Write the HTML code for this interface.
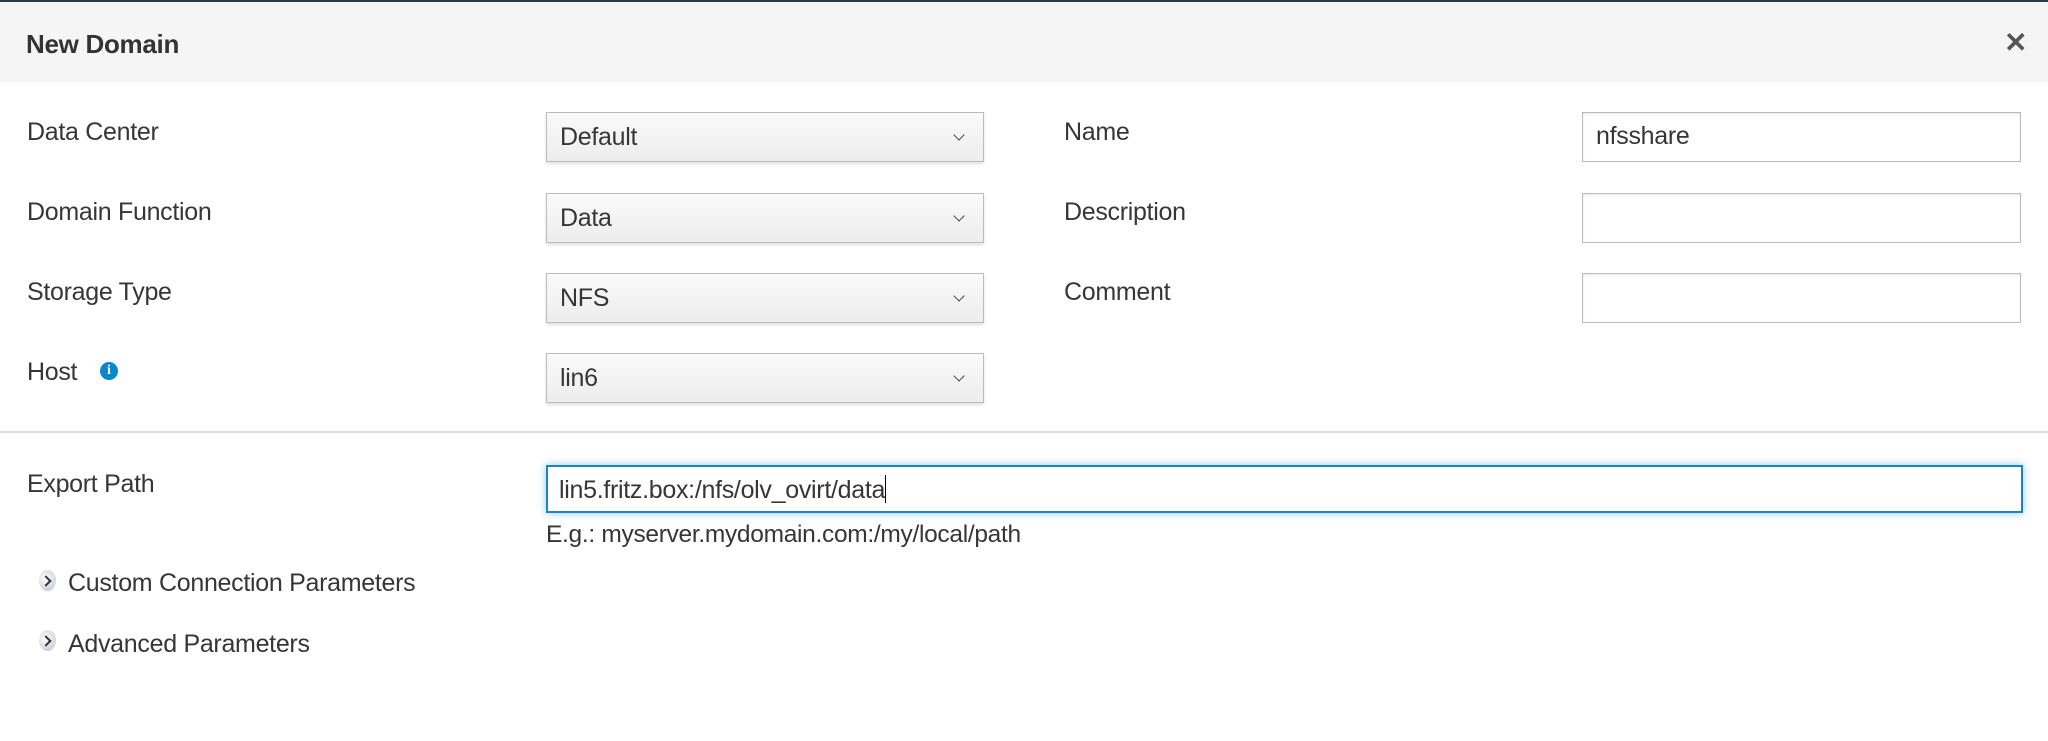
<!DOCTYPE html>
<html><head><meta charset="utf-8"><style>
*{box-sizing:border-box;margin:0;padding:0}
body{width:2048px;height:741px;background:#fff;font-family:"Liberation Sans",sans-serif;color:#363636;position:relative;overflow:hidden}
.topline{position:absolute;left:0;top:0;width:2048px;height:2px;background:#2b3a4a}
.hdr{position:absolute;left:0;top:2px;width:2048px;height:80px;background:#f5f5f5}
.title{position:absolute;left:26px;top:27px;font-size:26px;font-weight:bold;color:#333;letter-spacing:-0.3px}
.close{position:absolute;left:2004px;top:24px;font-size:28px;font-weight:bold;color:#555}
.lbl{position:absolute;font-size:25px;color:#363636;line-height:28px;letter-spacing:-0.3px}
.sel{position:absolute;width:438px;height:50px;border:1px solid #bbb;background:linear-gradient(#fafafa,#ededed);box-shadow:0 2px 3px rgba(0,0,0,.12);font-size:25px;padding:10px 13px;color:#363636;letter-spacing:-0.3px}
.sel:after{content:"";position:absolute;right:20px;top:18px;width:7px;height:7px;border-right:1.5px solid #444;border-bottom:1.5px solid #444;transform:rotate(45deg)}
.inp{position:absolute;width:439px;height:50px;border:1px solid #bbb;box-shadow:inset 0 1px 2px rgba(0,0,0,.1);background:#fff;font-size:25px;padding:9px 13px;letter-spacing:-0.3px}
.div{position:absolute;left:0;top:431px;width:2048px;height:2px;background:#ddd}
.exp{position:absolute;left:546px;top:465px;width:1477px;height:48px;border:2px solid #1a84c8;box-shadow:0 0 8px rgba(0,136,206,.45);font-size:25px;padding:8px 11px;letter-spacing:-0.3px}
.caret{display:inline-block;width:1px;height:28px;background:#000;vertical-align:-5px}
.ico{position:absolute;width:17px;height:21px;border-radius:50%;background:radial-gradient(circle at 40% 40%,#fff,#cfd3dc 70%,#a8aebb)}
.ico:after{content:"";position:absolute;left:3px;top:7px;width:6px;height:6px;border-right:2px solid #333;border-top:2px solid #333;transform:rotate(45deg)}
.info{position:absolute;left:100px;top:362px;width:18px;height:18px;border-radius:50%;background:#0a87cc;color:#fff;font-size:14px;font-weight:bold;text-align:center;line-height:18px;font-family:"Liberation Serif",serif}
</style></head><body>
<div class="topline"></div>
<div class="hdr"><div class="title">New Domain</div><div class="close">✕</div></div>

<div class="lbl" style="left:27px;top:118px">Data Center</div>
<div class="lbl" style="left:27px;top:198px">Domain Function</div>
<div class="lbl" style="left:27px;top:278px">Storage Type</div>
<div class="lbl" style="left:27px;top:358px">Host</div>
<div class="info">i</div>

<div class="sel" style="left:546px;top:112px">Default</div>
<div class="sel" style="left:546px;top:193px">Data</div>
<div class="sel" style="left:546px;top:273px">NFS</div>
<div class="sel" style="left:546px;top:353px">lin6</div>

<div class="lbl" style="left:1064px;top:118px">Name</div>
<div class="lbl" style="left:1064px;top:198px">Description</div>
<div class="lbl" style="left:1064px;top:278px">Comment</div>

<div class="inp" style="left:1582px;top:112px">nfsshare</div>
<div class="inp" style="left:1582px;top:193px"></div>
<div class="inp" style="left:1582px;top:273px"></div>

<div class="div"></div>
<div class="lbl" style="left:27px;top:470px">Export Path</div>
<div class="exp">lin5.fritz.box:/nfs/olv_ovirt/data<span class="caret"></span></div>
<div class="lbl" style="left:546px;top:521px;font-size:24.5px">E.g.: myserver.mydomain.com:/my/local/path</div>

<div class="ico" style="left:39px;top:570px"></div>
<div class="lbl" style="left:68px;top:569px">Custom Connection Parameters</div>
<div class="ico" style="left:39px;top:630px"></div>
<div class="lbl" style="left:68px;top:630px">Advanced Parameters</div>
</body></html>
